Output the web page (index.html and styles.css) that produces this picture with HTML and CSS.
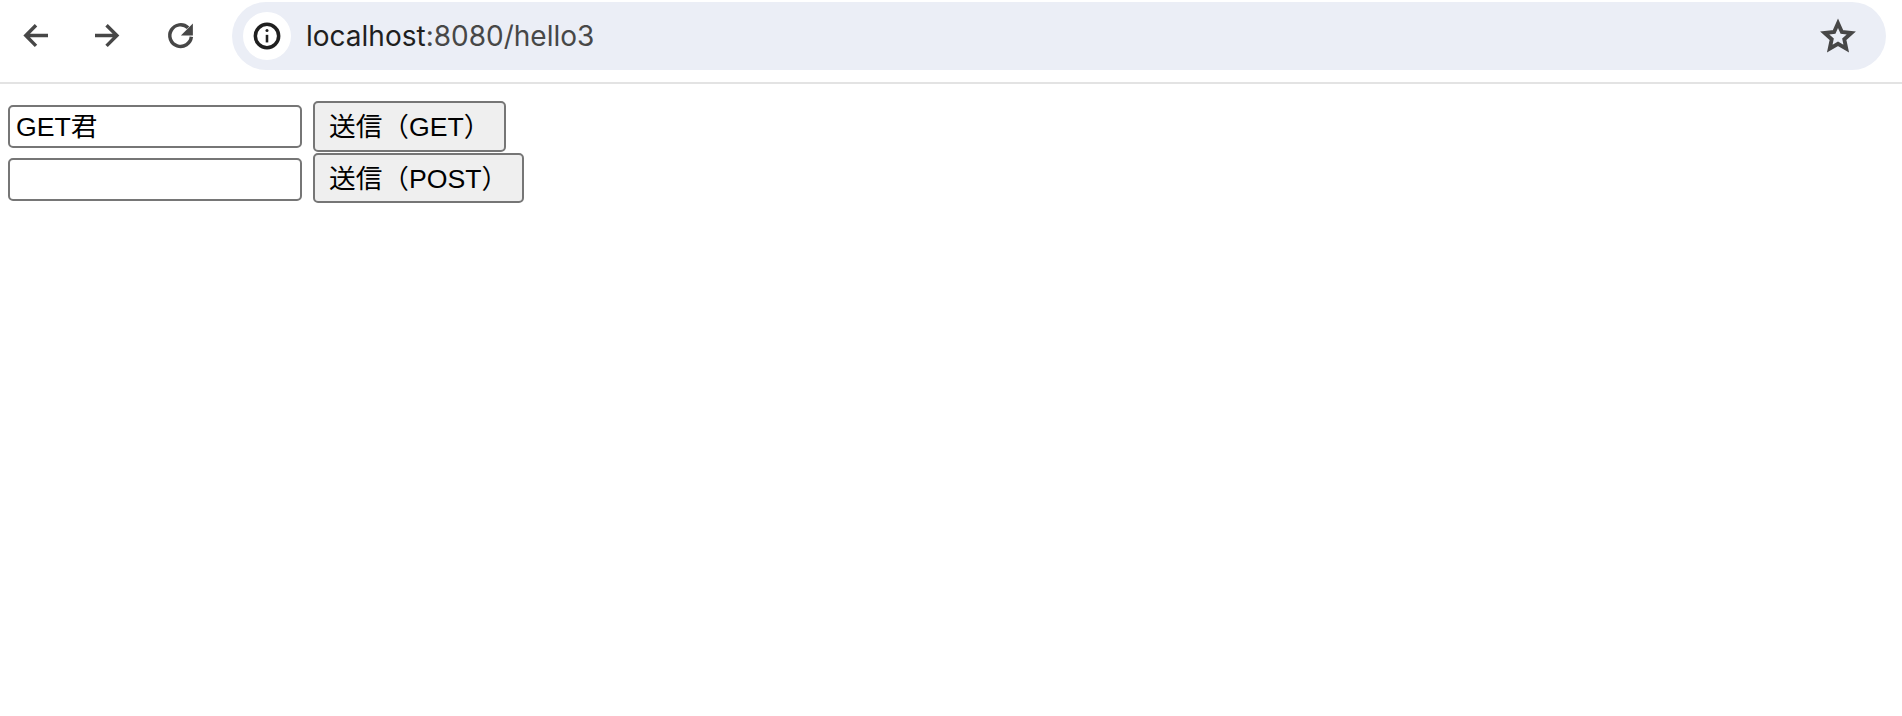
FILE: index.html
```html
<!DOCTYPE html>
<html lang="ja">
<head>
    <meta charset="UTF-8">
    <title>hello3</title>
    <link rel="stylesheet" href="styles.css">
</head>
<body>
    <header class="toolbar">
        <div class="nav-buttons">
            <svg class="nav-icon" viewBox="0 0 24 24"><path d="M20 11.700H5.500M12 4.800l-6.800 6.900 6.800 6.900"/></svg>
            <svg class="nav-icon" viewBox="0 0 24 24"><path d="M4 11.700h14.500M11.700 4.800l6.900 6.900-6.900 6.900"/></svg>
            <svg class="nav-icon" viewBox="0 0 24 24"><path d="M20.900 12.500A7.200 7.200 0 1 1 18.700 6.500"/><path class="filled" d="M21.900 3.700v8h-8z"/></svg>
        </div>
        <div class="omnibox">
            <div class="site-info">
                <svg class="info-icon" viewBox="0 0 24 24">
                    <circle cx="12" cy="12" r="10"/>
                    <path class="stem" d="M12 11v6.500"/>
                    <circle class="dot" cx="12" cy="7.300" r="1.300"/>
                </svg>
            </div>
            <div class="url"><span class="host">localhost</span>:8080/hello3</div>
            <svg class="star" viewBox="0 0 24 24"><path d="M12 3.500l2.600 5.800 6.300.7-4.700 4.200 1.300 6.200L12 17.200l-5.500 3.200 1.300-6.200L3.100 10l6.300-.7z"/></svg>
        </div>
    </header>

    <main class="content">
        <form class="row row-get">
            <input class="name-input" type="text" value="GET君">
            <button class="send" type="button">送信（GET）</button>
        </form>
        <form class="row row-post">
            <input class="name-input" type="text">
            <button class="send" type="button">送信（POST）</button>
        </form>
    </main>
</body>
</html>
```

FILE: styles.css
```css
body {
    margin: 0;
    background-color: #fff;
    overflow: hidden;
    font-family: "Liberation Sans", "Noto Sans CJK JP", sans-serif;
}

.toolbar {
    height: 84px;
    box-sizing: border-box;
    border-bottom: 2px solid #e3e3e3;
    padding: 2px 16px 0 0;
    display: flex;
    align-items: flex-start;
}

.nav-buttons {
    flex: 0 0 232px;
    height: 68px;
    padding-left: 18px;
    box-sizing: border-box;
    display: flex;
    align-items: center;
    gap: 35px;
}

.nav-icon {
    flex: none;
    width: 36px;
    height: 36px;
    fill: none;
    stroke: #474747;
    stroke-width: 2.3;
}

.nav-icon .filled {
    fill: #474747;
    stroke: none;
}

.omnibox {
    flex: 1;
    height: 68px;
    border-radius: 34px;
    background-color: #ebeef6;
    display: flex;
    align-items: center;
    padding: 0 30px 0 11px;
}

.site-info {
    flex: none;
    width: 48px;
    height: 48px;
    border-radius: 50%;
    background-color: #fff;
    display: flex;
    justify-content: center;
    align-items: center;
}

.info-icon {
    width: 28px;
    height: 28px;
    margin-left: -1px;
    fill: none;
    stroke: #1f1f1f;
    stroke-width: 3;
}

.info-icon .stem {
    stroke-width: 2.2;
}

.info-icon .dot {
    fill: #1f1f1f;
    stroke: none;
}

.url {
    flex: 1;
    margin-left: 15px;
    font-family: Inter, Roboto, sans-serif;
    font-size: 28px;
    color: #474747;
}

.host {
    color: #1f1f1f;
}

.star {
    flex: none;
    width: 36px;
    height: 36px;
    fill: none;
    stroke: #474747;
    stroke-width: 2.6;
}

.content {
    padding: 17px 0 0 8px;
}

.row {
    display: flex;
    align-items: center;
    gap: 11px;
}

.row-post {
    margin-top: 1px;
}

.row-post .name-input {
    margin-top: 3px;
}

.name-input {
    width: 294px;
    height: 43px;
    box-sizing: border-box;
    border: 2px solid #767676;
    border-radius: 5px;
    padding: 0 6px 5px;
    font: 26.67px "Liberation Sans", "Noto Sans CJK JP", sans-serif;
    color: #000;
}

.send {
    height: 50px;
    box-sizing: border-box;
    border: 2px solid #767676;
    border-radius: 5px;
    padding: 0 14px 3px;
    background-color: #efefef;
    font: 26.67px "Liberation Sans", "Noto Sans CJK JP", sans-serif;
    color: #000;
}

.row-get .send {
    height: 51px;
    padding-bottom: 5px;
}
```
